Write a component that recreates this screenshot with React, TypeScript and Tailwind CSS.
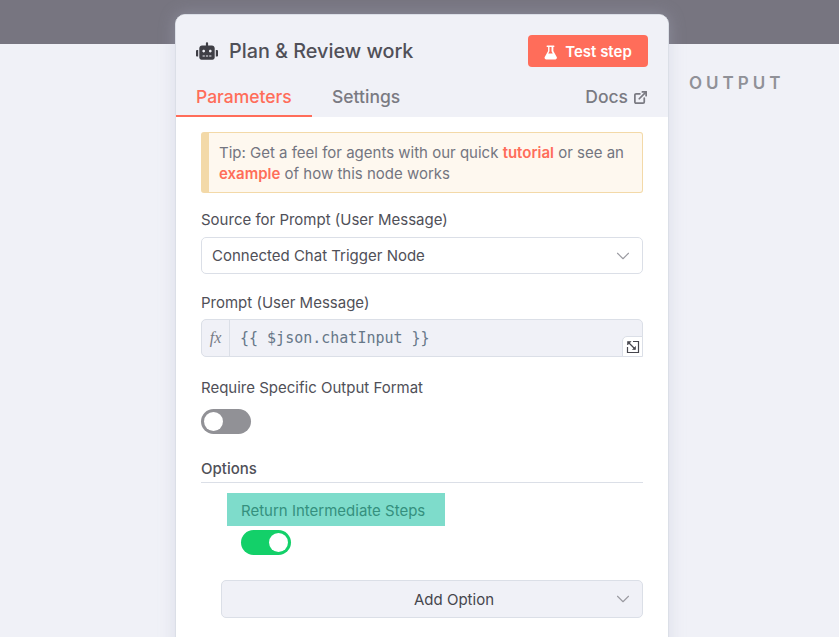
import { ChevronDown, ExternalLink } from "lucide-react"

function RobotIcon() {
  return (
    <svg viewBox="0 0 640 512" className="w-[22px] h-[18px] text-[#3f3f46]" fill="currentColor">
      <path d="M32 224h32v192H32c-18 0-32-14-32-32V256c0-18 14-32 32-32zm512-48v272c0 35-29 64-64 64H160c-35 0-64-29-64-64V176c0-44 36-80 80-80h112V32c0-18 14-32 32-32s32 14 32 32v64h112c44 0 80 36 80 80zM264 256c0-22-18-40-40-40s-40 18-40 40 18 40 40 40 40-18 40-40zm-8 128h-64v32h64v-32zm96 0h-64v32h64v-32zm104-128c0-22-18-40-40-40s-40 18-40 40 18 40 40 40 40-18 40-40zm-8 128h-64v32h64v-32zm192-128v128c0 18-14 32-32 32h-32V224h32c18 0 32 14 32 32z" />
    </svg>
  )
}

function FlaskIcon() {
  return (
    <svg viewBox="0 0 14 16" className="w-[13px] h-[15px]" fill="currentColor">
      <path fillRule="evenodd" d="M3.5 0.5h7a.8.8 0 0 1 0 1.6h-.4v4.2l3.6 6.6c.7 1.2-.2 2.6-1.5 2.6H2.3c-1.3 0-2.2-1.4-1.5-2.6l3.6-6.6V2.100h-.9a.8.8 0 0 1 0-1.600zM5.900 2.100v4.600L4.600 9h4.800L8.100 6.700V2.100z" />
    </svg>
  )
}

function ExpandIcon() {
  return (
    <svg viewBox="0 0 14 14" className="w-[14px] h-[14px] text-[#46464d]" fill="none" stroke="currentColor" strokeWidth="1.2">
      <path d="M7 1.500H12.500V12.500H1.500V7" />
      <path d="M2.500 2.500L9 9" />
      <path d="M1.500 1.500H5L1.500 5Z" fill="currentColor" strokeWidth="0.6" />
      <path d="M9.500 9.500H6.500L9.500 6.500Z" fill="currentColor" strokeWidth="0.6" />
    </svg>
  )
}

function Toggle({ on }: { on: boolean }) {
  return (
    <div className={`w-[50px] h-[25px] rounded-full p-[3px] flex ${on ? "bg-[#13d069] justify-end" : "bg-[#919196] justify-start"}`}>
      <div className="w-[19px] h-[19px] rounded-full bg-white" />
    </div>
  )
}

export default function App() {
  return (
    <div className="relative w-[839px] h-[637px] overflow-hidden bg-[#f0f1f7] font-['Inter',sans-serif]">
      <div className="h-[44px] bg-[#777580]" />
      <div className="pl-[689px] pt-[28px] text-[17px] leading-[22px] font-semibold tracking-[4px] text-[#909198]">OUTPUT</div>

      <div className="absolute left-[175px] top-[14px] w-[494px] h-[640px] rounded-t-[10px] border border-[#dbdfe7] bg-white shadow-[0_0_16px_rgba(180,185,205,0.35)] overflow-hidden">
        <div className="h-[102px] bg-[#f0f1f7]">
          <div className="flex items-center justify-between pl-[20px] pr-[20px] pt-[20px]">
            <div className="flex items-center gap-[11px]">
              <RobotIcon />
              <span className="text-[19.8px] leading-[30px] font-medium text-[#505058]">Plan &amp; Review work</span>
            </div>
            <button className="w-[120px] h-[32px] pt-[2px] rounded-[4px] bg-[#ff6d5a] text-white text-[15px] font-semibold flex items-center justify-center gap-[8px]">
              <FlaskIcon />
              Test step
            </button>
          </div>
          <div className="flex items-end justify-between pr-[20px] mt-[16px] h-[34px]">
            <div className="flex h-full">
              <div className="w-[136px] pl-[20px] border-b-[2px] border-[#ff6d5a] text-[17.5px] leading-[28px] font-medium text-[#ff6d5a]">Parameters</div>
              <div className="pl-[20px] text-[17.5px] leading-[28px] font-medium text-[#7a7a82]">Settings</div>
            </div>
            <div className="flex items-center gap-[5px] h-full pb-[6px] text-[17.5px] leading-[28px] font-medium text-[#7a7a82]">
              Docs
              <ExternalLink className="w-[15px] h-[15px]" strokeWidth={2.8} />
            </div>
          </div>
        </div>

        <div className="pl-[25px] pr-[25px] pt-[15px] text-[15px] text-[#505058]">
          <div className="h-[61px] border border-[#f3d9a8] border-l-[8px] rounded-[3px] bg-[#fef8ef] pl-[10px] pt-[9px] leading-[21px] text-[#737580]">
            Tip: Get a feel for agents with our quick <span className="font-semibold text-[#ff6d5a]">tutorial</span> or see an{" "}
            <span className="font-semibold text-[#ff6d5a]">example</span> of how this node works
          </div>

          <div className="mt-[16px] leading-[22px]">Source for Prompt (User Message)</div>
          <div className="mt-[6px] h-[37px] border border-[#dbdfe7] rounded-[5px] pl-[10px] pr-[8px] flex items-center justify-between">
            <span className="pt-[2px]">Connected Chat Trigger Node</span>
            <ChevronDown className="w-[22px] h-[22px] text-[#9a9aa1]" strokeWidth={1.2} />
          </div>

          <div className="mt-[18px] leading-[22px]">Prompt (User Message)</div>
          <div className="relative mt-[5px] h-[38px] border border-[#dbdfe7] rounded-[5px] bg-[#f0f1f7] flex">
            <div className="w-[28px] border-r border-[#dbdfe7] flex items-center justify-center font-['Liberation_Serif',serif] italic text-[16px] text-[#777a84]">fx</div>
            <div className="pl-[10px] leading-[36px] font-['DejaVu_Sans_Mono',monospace] text-[15px] text-[#667788]">{"{{ $json.chatInput }}"}</div>
            <div className="absolute right-[-1px] bottom-[-1px] w-[21px] h-[21px] bg-white border border-[#dbdfe7] rounded-tl-[5px] flex items-center justify-center">
              <ExpandIcon />
            </div>
          </div>

          <div className="mt-[20px] leading-[22px]">Require Specific Output Format</div>
          <div className="mt-[10px]"><Toggle on={false} /></div>

          <div className="mt-[24px] leading-[22px] pb-[2px] border-b border-[#dbdfe7] font-medium">Options</div>

          <div className="ml-[26px] mt-[10px] w-[218px] h-[33px] bg-[#7edccb] pl-[14px] leading-[36px] text-[#35907e]">Return Intermediate Steps</div>
          <div className="ml-[40px] mt-[4px]"><Toggle on /></div>

          <div className="relative ml-[20px] mt-[25px] h-[38px] border border-[#dbdfe7] rounded-[5px] bg-[#f0f1f7] flex items-center justify-center pl-[44px]">
            <span className="pt-[2px] text-[#46464d]">Add Option</span>
            <ChevronDown className="absolute right-[8px] w-[22px] h-[22px] text-[#9a9aa1]" strokeWidth={1.2} />
          </div>
        </div>
      </div>
    </div>
  )
}
